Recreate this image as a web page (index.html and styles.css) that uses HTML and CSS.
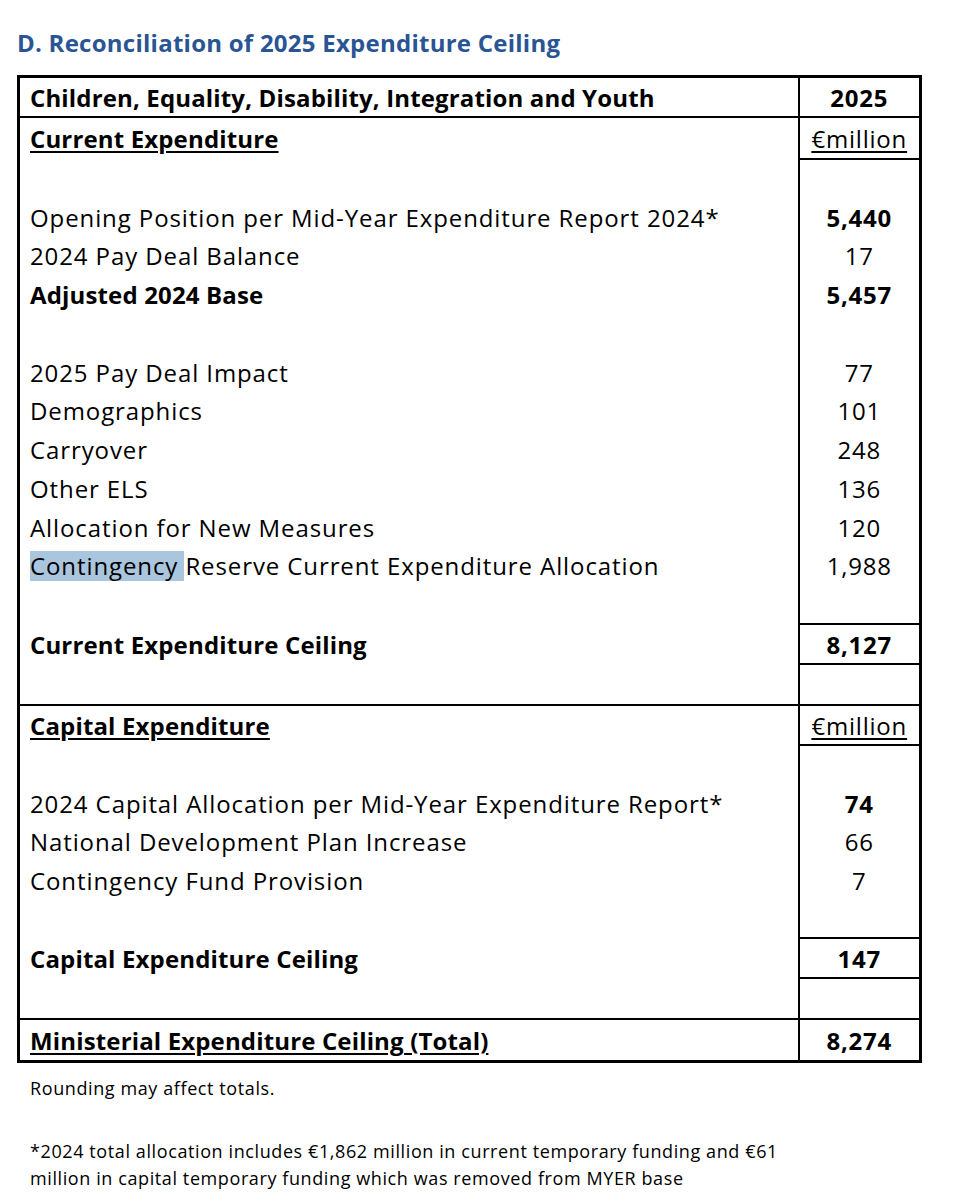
FILE: index.html
```html
<!DOCTYPE html>
<html lang="en">
<head>
<meta charset="utf-8">
<title>D. Reconciliation of 2025 Expenditure Ceiling</title>
<link rel="stylesheet" href="styles.css">
</head>
<body>
<div class="page">
  <h1 class="title">D. Reconciliation of 2025 Expenditure Ceiling</h1>
  <table class="recon">
    <colgroup><col class="c-label"><col class="c-val"></colgroup>
    <tbody>
      <tr class="r-head line-full">
        <td class="b">Children, Equality, Disability, Integration and Youth</td>
        <td class="v b">2025</td>
      </tr>
      <tr class="r-sec">
        <td class="b u">Current Expenditure</td>
        <td class="v u line-v">€million</td>
      </tr>
      <tr class="r"><td></td><td class="v"></td></tr>
      <tr class="r"><td>Opening Position per Mid-Year Expenditure Report 2024*</td><td class="v b">5,440</td></tr>
      <tr class="r"><td>2024 Pay Deal Balance</td><td class="v">17</td></tr>
      <tr class="r"><td class="b">Adjusted 2024 Base</td><td class="v b">5,457</td></tr>
      <tr class="r"><td></td><td class="v"></td></tr>
      <tr class="r"><td>2025 Pay Deal Impact</td><td class="v">77</td></tr>
      <tr class="r"><td>Demographics</td><td class="v">101</td></tr>
      <tr class="r"><td>Carryover</td><td class="v">248</td></tr>
      <tr class="r"><td>Other ELS</td><td class="v">136</td></tr>
      <tr class="r"><td>Allocation for New Measures</td><td class="v">120</td></tr>
      <tr class="r"><td><span class="hl">Contingency</span> Reserve Current Expenditure Allocation</td><td class="v">1,988</td></tr>
      <tr class="r"><td></td><td class="v line-v"></td></tr>
      <tr class="r-total"><td class="b">Current Expenditure Ceiling</td><td class="v b line-v">8,127</td></tr>
      <tr class="r-gap line-full"><td></td><td class="v"></td></tr>
      <tr class="r-sec2">
        <td class="b u">Capital Expenditure</td>
        <td class="v u line-v">€million</td>
      </tr>
      <tr class="r"><td></td><td class="v"></td></tr>
      <tr class="r"><td>2024 Capital Allocation per Mid-Year Expenditure Report*</td><td class="v b">74</td></tr>
      <tr class="r"><td>National Development Plan Increase</td><td class="v">66</td></tr>
      <tr class="r"><td>Contingency Fund Provision</td><td class="v">7</td></tr>
      <tr class="r"><td></td><td class="v line-v"></td></tr>
      <tr class="r-total"><td class="b">Capital Expenditure Ceiling</td><td class="v b line-v">147</td></tr>
      <tr class="r-gap line-full"><td></td><td class="v"></td></tr>
      <tr class="r-last"><td class="b u">Ministerial Expenditure Ceiling (Total)</td><td class="v b">8,274</td></tr>
    </tbody>
  </table>
  <p class="note first">Rounding may affect totals.</p>
  <p class="note foot">*2024 total allocation includes €1,862 million in current temporary funding and €61<br>million in capital temporary funding which was removed from MYER base</p>
</div>
</body>
</html>
```

FILE: styles.css
```css
html, body {
  margin: 0;
  padding: 0;
  background: #ffffff;
}

.page {
  padding: 26px 0 0 17px;
  font-family: "Open Sans", Lato, "Noto Sans", sans-serif;
  color: #000000;
}

.title {
  margin: 0 0 15px 0;
  font-size: 24px;
  line-height: 34px;
  font-weight: 700;
  color: #2a5595;
  letter-spacing: 0.25px;
}

.recon {
  width: 902px;
  border-collapse: collapse;
  table-layout: fixed;
  border: 3px solid #000;
  font-size: 24px;
}

.c-label { width: 780px; }
.c-val { width: 122px; }

.recon td {
  padding: 2px 0 0 10px;
  vertical-align: middle;
  white-space: nowrap;
  line-height: 30px;
  letter-spacing: 0.9px;
}

.recon td.b { letter-spacing: 0.15px; }

.recon td.v {
  padding-left: 0;
  text-align: center;
  border-left: 2px solid #000;
  letter-spacing: 0.8px;
}

.r-head { height: 40px; }
.r-sec { height: 42px; }
.r-sec2 { height: 40px; }
.r { height: 38.75px; }
.r-total { height: 40px; }
.r-gap { height: 41px; }
.r-last { height: 42px; }

.line-full td { border-bottom: 2px solid #000; }
td.line-v { border-bottom: 2px solid #000; }

.b { font-weight: 700; }
.u {
  text-decoration: underline;
  text-decoration-thickness: 2px;
  text-underline-offset: 3px;
}

.hl {
  display: inline-block;
  line-height: 30px;
  padding-right: 6px;
  margin-right: -6px;
  background: #aac6de;
}

.note {
  margin: 0;
  padding-left: 13px;
  font-size: 18px;
  line-height: 27px;
  letter-spacing: 0.6px;
}

.note.first { margin-top: 12px; }
.foot { margin-top: 36px; }
```
